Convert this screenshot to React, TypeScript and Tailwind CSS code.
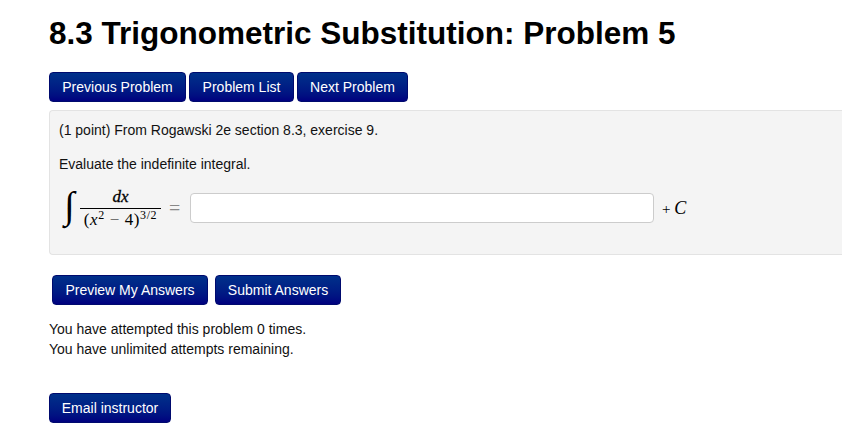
const Btn = ({ label, width }: { label: string; width: string }) => (
  <button className={`${width} h-[30px] rounded-[4px] border border-[#000a6e] bg-gradient-to-b from-[#00308a] to-[#00007f] text-white text-[14px] leading-[20px] whitespace-nowrap`}>
    {label}
  </button>
);

export default function App() {
  return (
    <div className="h-[428px] w-[842px] overflow-hidden bg-white pl-[49px] font-['Liberation_Sans',Arial,sans-serif] text-[14px] leading-[20px] text-[#111]">
      {/* TITLE */}
      <h1 className="pt-[13px] h-[72px] text-[31.5px] leading-[40px] font-bold text-black whitespace-nowrap">
        8.3 Trigonometric Substitution: Problem 5
      </h1>

      {/* NAV */}
      <div className="flex gap-[3px]">
        <Btn label="Previous Problem" width="w-[137px]" />
        <Btn label="Problem List" width="w-[105px]" />
        <Btn label="Next Problem" width="w-[111px]" />
      </div>

      {/* PROBLEM */}
      <div className="mt-[8px] h-[145px] border border-r-0 border-[#e3e3e3] rounded-l-[4px] bg-[#f4f4f4] pl-[9px] pt-[9px]">
        <p>(1 point) From Rogawski 2e section 8.3, exercise 9.</p>
        <p className="mt-[14px]">Evaluate the indefinite integral.</p>

        <div className="mt-[11px] flex h-[46px] items-center font-['Liberation_Serif',serif] text-black">
          <span className="w-[21px] pl-[5px] pb-[6px] text-[38px] leading-[46px] italic">∫</span>
          <div className="flex w-[81px] flex-col items-center text-[17px] leading-[20px]">
            <div className="w-full border-b-[1.5px] border-black pb-[1px] text-center italic [-webkit-text-stroke:0.3px_black]">dx</div>
            <div className="pt-[1px] whitespace-nowrap tracking-[0.6px]">
              (<i>x</i><sup className="text-[12px]">2</sup> <span className="text-[#555]">−</span> 4)<sup className="text-[12px]">3/2</sup>
            </div>
          </div>
          <span className="ml-[8px] w-[21px] text-[20px] text-[#888]">=</span>
          <input
            type="text"
            className="h-[30px] w-[464px] rounded-[4px] border border-[#ccc] bg-white"
          />
          <span className="ml-[8px] whitespace-nowrap text-[15px]">
            + <i className="text-[18px]">C</i>
          </span>
        </div>
      </div>

      {/* ACTIONS */}
      <div className="mt-[20px] ml-[3px] flex gap-[7px]">
        <Btn label="Preview My Answers" width="w-[156px]" />
        <Btn label="Submit Answers" width="w-[126px]" />
      </div>

      <p className="mt-[14px]">You have attempted this problem 0 times.</p>
      <p>You have unlimited attempts remaining.</p>

      <div className="mt-[34px] flex">
        <Btn label="Email instructor" width="w-[122px]" />
      </div>
    </div>
  );
}
